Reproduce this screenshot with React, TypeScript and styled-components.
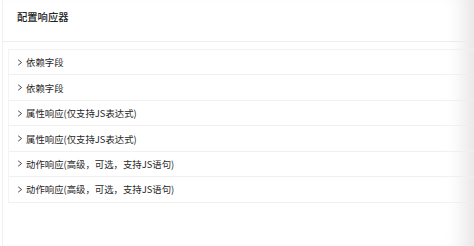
import * as React from 'react';
import styled, { createGlobalStyle } from 'styled-components';

const GlobalStyle = createGlobalStyle`
	html, body {
		margin: 0;
		padding: 0;
		background: #fff;
	}
	body {
		font-family: "Noto Sans CJK SC", "Noto Sans", "Liberation Sans", sans-serif;
		color: #333;
	}
`;

const Page = styled.div`
	box-sizing: border-box;
	width: 472px;
	height: 246px;
	margin-left: 2px;
	border-left: 1px solid #f1f1f1;
	box-shadow: inset -24px 0 20px -14px rgba(0, 0, 0, 0.1);
	display: flex;
	flex-direction: column;
	overflow: hidden;
`;

const Header = styled.div`
	box-sizing: border-box;
	height: 42px;
	padding: 9px 0 0 14px;
	border-bottom: 1px solid #ededed;
	font-size: 10.3px;
	line-height: 16px;
	color: #222;
	font-weight: 500;
`;

const List = styled.div`
	margin: 7px 0 0 5px;
	border-top: 1px solid #f1f1f1;
	border-left: 1px solid #f4f4f4;
	display: flex;
	flex-direction: column;
`;

const Row = styled.div`
	box-sizing: border-box;
	height: 25.45px;
	display: flex;
	align-items: center;
	gap: 3px;
	padding-left: 8px;
	border-bottom: 1px solid #f0f0f0;
	font-size: 9.4px;
	color: #1f1f1f;
`;

const Chevron = styled.svg`
	width: 6px;
	height: 7px;
	flex: none;
`;

const Label = styled.span`
	white-space: nowrap;
	line-height: 12px;
`;

const items = [
	'依赖字段',
	'依赖字段',
	'属性响应(仅支持JS表达式)',
	'属性响应(仅支持JS表达式)',
	'动作响应(高级，可选，支持JS语句)',
	'动作响应(高级，可选，支持JS语句)',
];

const App: React.FunctionComponent = () => {
	return (
		<>
			<GlobalStyle />
			<Page>
				<Header>配置响应器</Header>
				<List>
					{items.map((text, i) => (
						<Row key={i}>
							<Chevron viewBox="0 0 6 7">
								<polyline points="1.2,0.8 4.6,3.5 1.2,6.2" fill="none" stroke="#333" strokeWidth="0.9" />
							</Chevron>
							<Label>{text}</Label>
						</Row>
					))}
				</List>
			</Page>
		</>
	);
};

export default App;
